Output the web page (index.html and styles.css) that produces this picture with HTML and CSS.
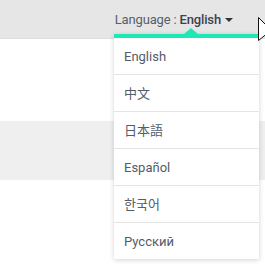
FILE: index.html
```html
<!DOCTYPE html>
<html>
<head>
<meta charset="utf-8">
<link rel="stylesheet" href="styles.css">
</head>
<body>
<header class="topbar">
  <div class="lang">
    <span class="lang-label">Language : </span><span class="lang-current">English</span><span class="caret"></span>
  </div>
</header>
<section class="band-white"></section>
<section class="band-gray"></section>
<ul class="menu">
  <li>English</li>
  <li>中文</li>
  <li>日本語</li>
  <li>Español</li>
  <li>한국어</li>
  <li>Русский</li>
</ul>
<svg class="cursor" width="12" height="26" viewBox="0 0 12 26"><path d="M0.5 0.5 L11 11 L11 15 L0.5 23.5 Z" fill="#fff" stroke="#111" stroke-width="1"/></svg>
</body>
</html>
```
FILE: styles.css
```css
html, body {
  margin: 0;
  padding: 0;
  background: #fff;
  font-family: Roboto, "Noto Sans", "Noto Sans CJK SC", sans-serif;
}
.topbar {
  height: 38px;
  background: #e6e6e6;
  border-bottom: 1px solid #dedede;
  display: flex;
  justify-content: flex-end;
  align-items: center;
  padding-right: 32px;
}
.lang {
  font-size: 13px;
  letter-spacing: -0.15px;
  color: #58606b;
  display: flex;
  align-items: center;
}
.lang-current {
  font-weight: 500;
  color: #3b4350;
  margin-left: 3px;
}
.caret {
  width: 0;
  height: 0;
  border-left: 4px solid transparent;
  border-right: 4px solid transparent;
  border-top: 4px solid #333;
  margin-left: 4px;
  margin-top: 1px;
}
.band-white {
  height: 82px;
}
.band-gray {
  height: 59px;
  background: #efefef;
}
.menu {
  position: absolute;
  left: 114px;
  top: 34px;
  width: 145px;
  margin: 0;
  padding: 0;
  list-style: none;
  background: #fff;
  border-top: 4px solid #1de9b6;
  box-shadow: 0 1px 5px rgba(0,0,0,0.18);
}
.menu::before {
  content: "";
  position: absolute;
  left: 70px;
  top: -10px;
  border-left: 7px solid transparent;
  border-right: 7px solid transparent;
  border-bottom: 6px solid #1de9b6;
}
.menu li {
  height: 36px;
  line-height: 37px;
  padding-left: 10px;
  font-size: 13px;
  color: #545c69;
  border-bottom: 1px solid #e4e4e4;
}
.menu li:last-child {
  border-bottom: none;
}
.cursor {
  position: absolute;
  left: 258px;
  top: 17px;
}
```
